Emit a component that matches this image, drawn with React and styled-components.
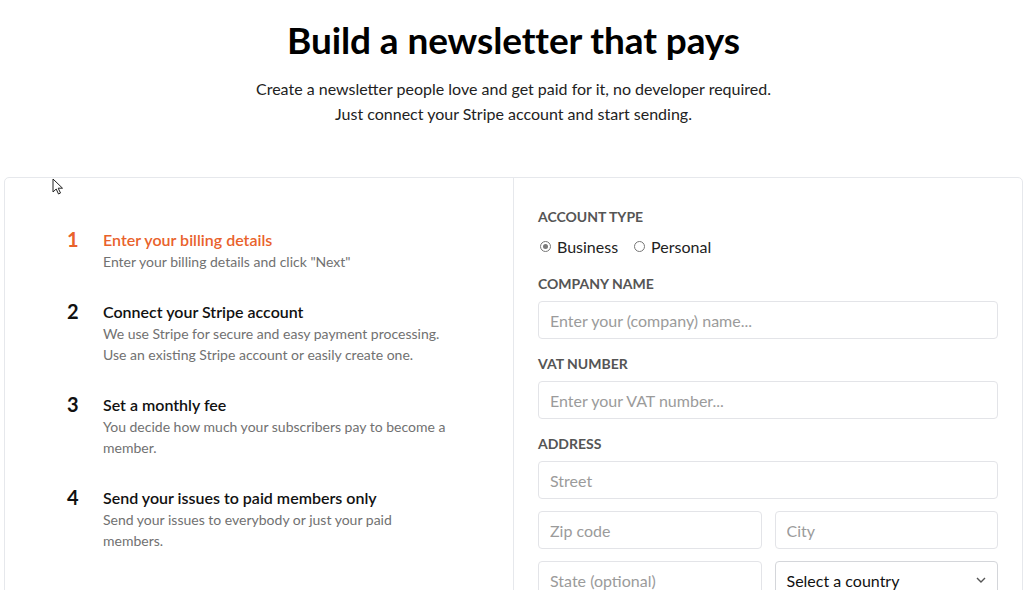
import React from 'react';
import styled, { createGlobalStyle } from 'styled-components';

const GlobalStyle = createGlobalStyle`
  * { box-sizing: border-box; }
  body {
    margin: 0;
    background: #fff;
    font-family: Lato, "Open Sans", sans-serif;
    color: #222;
    overflow: hidden;
  }
`;

const Page = styled.div`
  position: relative;
  height: 590px;
  overflow: hidden;
  padding: 0 1px 0 4px;
`;

const Header = styled.header`
  text-align: center;
  padding-top: 17px;
`;

const Title = styled.h1`
  margin: 0;
  font-size: 37px;
  line-height: 46px;
  font-weight: 700;
  color: #000;
  letter-spacing: -0.1px;
`;

const Lead = styled.p`
  margin: 13px 0 0;
  font-size: 16px;
  line-height: 25px;
  color: #222;
`;

const Card = styled.section`
  margin-top: 51px;
  display: grid;
  grid-template-columns: 508px 1fr;
  border: 1px solid #e6e8ec;
  border-radius: 5px;
  height: 440px;
`;

const Steps = styled.ol`
  list-style: none;
  margin: 0;
  padding: 50px 60px 0 62px;
  display: flex;
  flex-direction: column;
  gap: 28px;
`;

const Step = styled.li`
  display: grid;
  grid-template-columns: 36px 1fr;
`;

const Num = styled.span`
  font-size: 20px;
  line-height: 23px;
  font-weight: 700;
  color: ${p => (p.$active ? '#e9622b' : '#111')};
`;

const StepTitle = styled.div`
  font-size: 16px;
  line-height: 23px;
  font-weight: 600;
  color: ${p => (p.$active ? '#e9622b' : '#111')};
`;

const StepText = styled.div`
  font-size: 14px;
  line-height: 21px;
  color: #717171;
`;

const Form = styled.form`
  border-left: 1px solid #e6e8ec;
  padding: 29px 24px 0 24px;
  display: flex;
  flex-direction: column;
`;

const Label = styled.div`
  font-size: 14px;
  line-height: 20px;
  font-weight: 700;
  color: #555;
  text-transform: uppercase;
  margin: ${p => (p.$first ? '0' : '15px')} 0 7px;
`;

const RadioRow = styled.div`
  display: flex;
  align-items: center;
  gap: 14px;
  height: 25px;
  font-size: 16px;
  color: #222;
`;

const RadioOption = styled.label`
  display: flex;
  align-items: center;
  gap: 6px;
`;

const RadioDot = styled.span`
  width: 11px;
  height: 11px;
  border-radius: 50%;
  border: 1px solid #767676;
  margin-left: 2px;
  display: flex;
  align-items: center;
  justify-content: center;
  &::after {
    content: '';
    width: 5px;
    height: 5px;
    border-radius: 50%;
    background: ${p => (p.$checked ? '#7a7a7a' : 'transparent')};
  }
`;

const Input = styled.input`
  width: 100%;
  height: 38px;
  border: 1px solid #e3e4e8;
  border-radius: 4px;
  padding: 0 11px;
  font-family: Lato, sans-serif;
  font-size: 16px;
  color: #222;
  outline: none;
  &::placeholder { color: #9b9b9b; }
`;

const Row = styled.div`
  display: grid;
  grid-template-columns: 1fr 1fr;
  gap: 13px;
  margin-top: 12px;
`;

const SelectBox = styled.div`
  position: relative;
  height: 38px;
  border: 1px solid #d4d6da;
  border-radius: 4px;
  padding: 0 11px;
  display: flex;
  align-items: center;
  justify-content: space-between;
  font-size: 16px;
  color: #111;
`;

const Cursor = styled.svg`
  position: absolute;
  left: 52px;
  top: 178px;
`;

const steps = [
  { title: 'Enter your billing details', text: 'Enter your billing details and click "Next"', active: true },
  { title: 'Connect your Stripe account', text: 'We use Stripe for secure and easy payment processing. Use an existing Stripe account or easily create one.' },
  { title: 'Set a monthly fee', text: 'You decide how much your subscribers pay to become a member.' },
  { title: 'Send your issues to paid members only', text: 'Send your issues to everybody or just your paid members.' },
];

const App = () => (
  <>
    <GlobalStyle />
    <Page>
      <Header>
        <Title>Build a newsletter that pays</Title>
        <Lead>
          Create a newsletter people love and get paid for it, no developer required.
          <br />
          Just connect your Stripe account and start sending.
        </Lead>
      </Header>
      <Card>
        <Steps>
          {steps.map((s, i) => (
            <Step key={s.title}>
              <Num $active={s.active}>{i + 1}</Num>
              <div>
                <StepTitle $active={s.active}>{s.title}</StepTitle>
                <StepText>{s.text}</StepText>
              </div>
            </Step>
          ))}
        </Steps>
        <Form>
          <Label $first>Account type</Label>
          <RadioRow>
            <RadioOption><RadioDot $checked />Business</RadioOption>
            <RadioOption><RadioDot />Personal</RadioOption>
          </RadioRow>
          <Label>Company name</Label>
          <Input placeholder="Enter your (company) name..." />
          <Label>VAT number</Label>
          <Input placeholder="Enter your VAT number..." />
          <Label>Address</Label>
          <Input placeholder="Street" />
          <Row>
            <Input placeholder="Zip code" />
            <Input placeholder="City" />
          </Row>
          <Row>
            <Input placeholder="State (optional)" />
            <SelectBox>
              Select a country
              <svg width="10" height="6" viewBox="0 0 10 6">
                <path d="M1 1l4 4 4-4" fill="none" stroke="#555" strokeWidth="1.4" />
              </svg>
            </SelectBox>
          </Row>
        </Form>
      </Card>
      <Cursor width="13" height="17" viewBox="0 0 13 17">
        <path d="M1 1v13l3.2-3 2.3 5 2-1-2.3-4.8h4.3z" fill="#fff" stroke="#222" strokeWidth="1" strokeLinejoin="round" />
      </Cursor>
    </Page>
  </>
);

export default App;
